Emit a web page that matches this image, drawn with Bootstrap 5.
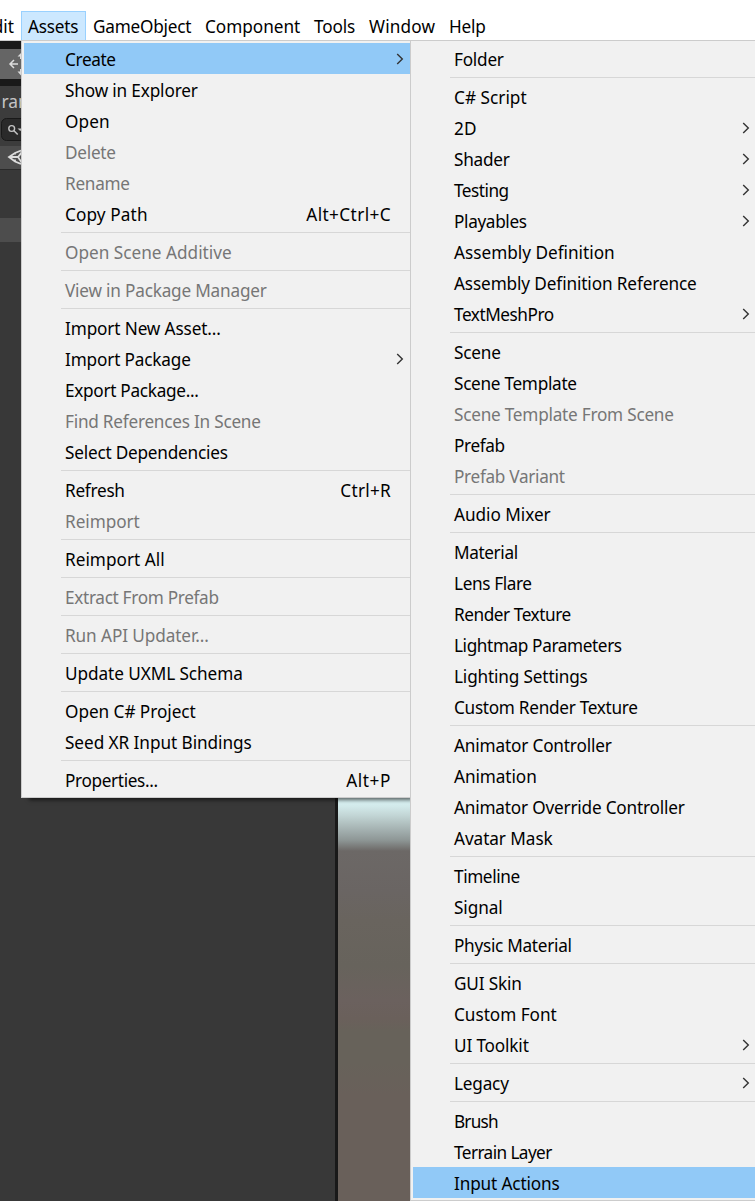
<!DOCTYPE html>
<html lang="en">
<head>
<meta charset="utf-8">
<meta name="viewport" content="width=device-width, initial-scale=1">
<title>Editor – Assets menu</title>
<link href="https://cdn.jsdelivr.net/npm/bootstrap@5.3.0/dist/css/bootstrap.min.css" rel="stylesheet">
<style>
  body { width: 755px; height: 1201px; background: #383838; font-family: "Noto Sans", sans-serif; font-size: 17.2px; line-height: 31px; color: #000; }
  .menubar { height: 41px; background: #fff; border-bottom: 1px solid #ccc; padding-top: 11px; }
  .menubar .nav-link { color: #000; padding: 0 0 0 6px; height: 30px; line-height: 29px; border: 1px solid transparent; border-bottom: 0; white-space: nowrap; flex: none; }
  .menubar .nav-link > span { display: block; }
  .menubar .edit { width: 21px; display: flex; justify-content: flex-end; padding: 0 7px 0 0; border: 0; line-height: 31px; }
  .menubar .open { background: #cce8ff; border: 1px solid #99d1ff; }
  .strip { width: 21px; background: #383838; }
  .strip svg { display: block; }
  .scene { width: 75px; border-left: 3px solid #191919; background: linear-gradient(#d8f1f2 0, #d8f1f2 762px, #c3d6d6 774px, #8e9796 799px, #6c6866 810px, #6a6563 850px, #69645e 880px, #67635c 925px, #6b615e 960px, #6a605b 978px, #67625a 990px, #67625a 1020px, #69605a 1055px, #69605a 1161px); }
  .popup { position: absolute; top: 40px; z-index: 5; background: #f1f1f1; border: 1px solid #ccc; padding: 2px 0 2px 2px; }
  .popup-main { left: 21px; width: 390px; height: 758px; box-shadow: 5px 5px 4px -3px rgba(0,0,0,.6); }
  .popup-sub { left: 410px; width: 346px; height: 1161px; }
  .entry { display: flex; align-items: center; height: 31px; padding: 0 19px 0 41px; white-space: nowrap; }
  .entry > span { padding-top: 2px; }
  .entry.hot { background: #91c9f7; }
  .entry.off { color: #767676; }
  .popup hr { margin: 3px 0 3px 37px; border-top: 1px solid #d7d7d7; opacity: 1; }
  .chev { width: 8px; height: 12px; margin-right: -13px; margin-left: auto; }
  .popup-sub .chev { margin-right: -14px; }
</style>
</head>
<body class="overflow-hidden position-relative d-flex flex-column">
<nav class="menubar nav flex-nowrap flex-shrink-0 w-100">
  <a class="nav-link edit overflow-hidden">Edit</a>
  <a class="nav-link open" style="width:65px"><span data-w="49.500">Assets</span></a>
  <a class="nav-link" style="width:112px"><span data-w="97.500">GameObject</span></a>
  <a class="nav-link" style="width:109px"><span data-w="94.500">Component</span></a>
  <a class="nav-link" style="width:55px"><span data-w="40.500">Tools</span></a>
  <a class="nav-link" style="width:80px"><span data-w="65.500">Window</span></a>
  <a class="nav-link" style="width:55px"><span data-w="36">Help</span></a>
</nav>
<main class="d-flex flex-grow-1">
  <div class="strip">
    <svg width="21" height="210" viewBox="0 41 21 210">
      <path fill="#191919" d="M0 41h21v8H0zM0 79h21v7H0z"/>
      <path fill="#656565" d="M0 49h21v30H0z"/>
      <path fill="#3c3c3c" d="M0 86h21v60H0z"/>
      <path fill="#4d4d4d" d="M0 218h21v24H0zM0 146h21v23H0z"/>
      <path fill="#2a2a2a" d="M0 169h21v1H0z"/>
      <path stroke="#ddd" stroke-width="1.500" fill="none" d="M18 64H10m4-4-4 4 4 4"/>
      <path fill="#ddd" d="m17.500 56.500 4-4v4zM17.500 71.500h3.500v4z"/>
      <path stroke="#ddd" d="M20.500 56v3M20.500 69v3"/>
      <text x="1.500" y="108" fill="#c4c4c4" font-size="17.400">ran</text>
      <rect x="1.500" y="118.500" width="40" height="22" rx="5" fill="#2a2a2a" stroke="#191919"/>
      <circle cx="11.700" cy="128.500" r="2.900" fill="none" stroke="#c4c4c4" stroke-width="1.400"/>
      <path stroke="#c4c4c4" stroke-width="1.500" d="m13.700 130.500 4 4"/>
      <path fill="#c4c4c4" d="M17.500 128.500H23l-2.700 2.500z"/>
      <path stroke="#ddd" stroke-width="1.800" fill="none" d="M21 150.500 15 153l-6 4 6 4.500 6 2.500M9 157h9l4-5M18 157l4 6M15 153v1.500M15 159.500v2"/>
    </svg>
  </div>
  <div style="width:314px"></div>
  <div class="scene"></div>
</main>
<div class="popup popup-main" id="assets"></div>
<div class="popup popup-sub" id="create"></div>
<script src="https://cdn.jsdelivr.net/npm/bootstrap@5.3.0/dist/js/bootstrap.bundle.min.js"></script>
<script>
// Entries: [label, label width, flags, shortcut, shortcut width]; '-' is a divider. Flags: h = hot, x = disabled, s = has submenu.
const assets = [['Create',50,'hs'],['Show in Explorer',132],['Open',44],['Delete',50,'x'],['Rename',64,'x'],['Copy Path',82,'','Alt+Ctrl+C',84],'-',
['Open Scene Additive',166,'x'],'-',['View in Package Manager',201,'x'],'-',
['Import New Asset...',155],['Import Package',125,'s'],['Export Package...',133],['Find References In Scene',195,'x'],['Select Dependencies',162],'-',
['Refresh',59,'','Ctrl+R',50],['Reimport',74,'x'],'-',['Reimport All',99],'-',['Extract From Prefab',153,'x'],'-',['Run API Updater...',143,'x'],'-',
['Update UXML Schema',177],'-',['Open C# Project',130],['Seed XR Input Bindings',186],'-',['Properties...',92,'','Alt+P',44]];
const create = [['Folder',49],'-',['C# Script',72],['2D',22,'s'],['Shader',55,'s'],['Testing',54,'s'],['Playables',72,'s'],['Assembly Definition',160],['Assembly Definition Reference',242],['TextMeshPro',99,'s'],'-',
['Scene',46],['Scene Template',122],['Scene Template From Scene',219,'x'],['Prefab',50],['Prefab Variant',110,'x'],'-',['Audio Mixer',96],'-',
['Material',63],['Lens Flare',77],['Render Texture',116],['Lightmap Parameters',167],['Lighting Settings',133],['Custom Render Texture',183],'-',
['Animator Controller',157],['Animation',82],['Animator Override Controller',230],['Avatar Mask',98],'-',['Timeline',65],['Signal',48],'-',['Physic Material',117],'-',
['GUI Skin',67],['Custom Font',102],['UI Toolkit',74,'s'],'-',['Legacy',54,'s'],'-',['Brush',43],['Terrain Layer',97],['Input Actions',105,'h']];
const chev = '<svg class="chev" viewBox="0 0 8 12"><path d="M1.200 1 6.300 6l-5.100 5" fill="none" stroke="#333" stroke-width="1.400"/></svg>';
const fill = (id, list) => document.getElementById(id).innerHTML = list.map(e => {
  if (e === '-') return '<hr>';
  const [t, w, f = '', k, kw] = e;
  return `<div class="entry ${f.includes('h') ? 'hot' : ''} ${f.includes('x') ? 'off' : ''}"><span data-w="${w}">${t}</span>${k ? `<span class="ms-auto" data-w="${kw}">${k}</span>` : ''}${f.includes('s') ? chev : ''}</div>`;
}).join('');
fill('assets', assets);
fill('create', create);
// Space the letters of each label so that it takes its listed width.
document.querySelectorAll('[data-w]').forEach(s => {
  const r = document.createRange(); r.selectNodeContents(s);
  s.style.letterSpacing = ((+s.dataset.w + 0.7 - r.getBoundingClientRect().width) / s.textContent.length).toFixed(3) + 'px';
});
</script>
</body>
</html>
